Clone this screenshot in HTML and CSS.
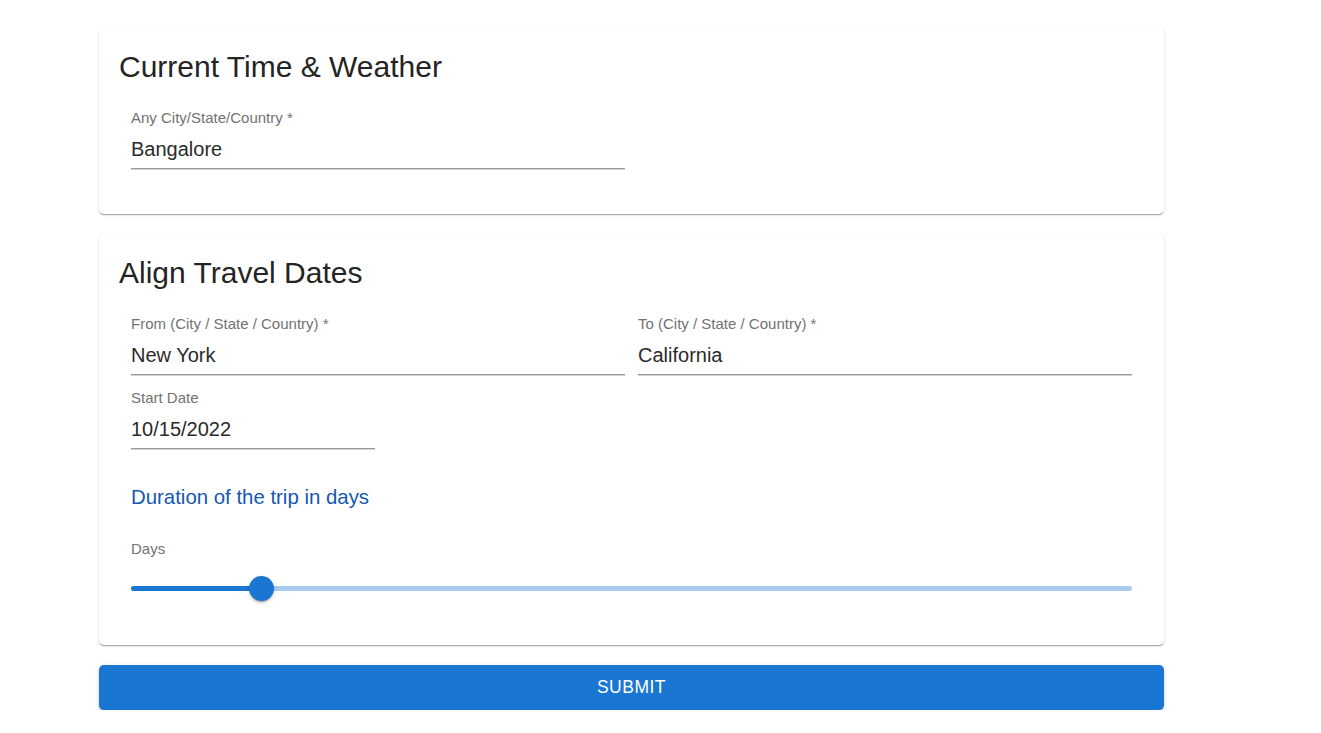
FILE: index.html
```html
<!DOCTYPE html>
<html lang="en">
<head>
<meta charset="UTF-8" />
<title>Time, Weather &amp; Travel</title>
<link rel="stylesheet" href="styles.css">
</head>
<body>
  <div class="page">
    <div class="card card-weather">
      <h2 class="card-title">Current Time &amp; Weather</h2>
      <div class="fields">
        <div class="field">
          <label class="field-label">Any City/State/Country *</label>
          <div class="field-input">Bangalore</div>
        </div>
      </div>
    </div>

    <div class="card card-travel">
      <h2 class="card-title">Align Travel Dates</h2>
      <div class="fields grid-two">
        <div class="field">
          <label class="field-label">From (City / State / Country) *</label>
          <div class="field-input">New York</div>
        </div>
        <div class="field">
          <label class="field-label">To (City / State / Country) *</label>
          <div class="field-input">California</div>
        </div>
        <div class="field field-date">
          <label class="field-label">Start Date</label>
          <div class="field-input">10/15/2022</div>
        </div>
      </div>

      <div class="duration">
        <p class="duration-title">Duration of the trip in days</p>
        <span class="field-label">Days</span>
        <div class="slider">
          <div class="slider-rail"></div>
          <div class="slider-track" style="width: 13%"></div>
          <div class="slider-thumb" style="left: 13%"></div>
        </div>
      </div>
    </div>

    <button type="button" class="submit">Submit</button>
  </div>
</body>
</html>
```

FILE: styles.css
```css
* {
  box-sizing: border-box;
}
body {
  margin: 0;
  background: #fff;
  color: rgba(0, 0, 0, 0.87);
  font-family: "Liberation Sans", Arial, sans-serif;
}
.page {
  width: 1065px;
  margin: 27px 0 0 99px;
}
.card {
  background: #fff;
  border-radius: 5px;
  box-shadow: 0 2px 1px -1px rgba(0, 0, 0, 0.2),
              0 1px 1px 0 rgba(0, 0, 0, 0.14),
              0 1px 3px 0 rgba(0, 0, 0, 0.12);
  padding: 20px 20px 45px;
}
.card-travel {
  margin-top: 19px;
  padding-bottom: 44px;
}
.card-title {
  margin: 0;
  font-size: 30px;
  font-weight: 400;
  line-height: 40px;
  color: #242424;
}
.fields {
  margin: 21px 12px 0;
}
.grid-two {
  display: grid;
  grid-template-columns: 1fr 1fr;
  gap: 13px;
}
.field {
  display: flex;
  flex-direction: column;
  width: 494px;
}
.grid-two .field {
  width: auto;
}
.grid-two .field-date {
  width: 244px;
}
.field-label {
  display: block;
  font-size: 15px;
  line-height: 20px;
  color: #727272;
}
.field-input {
  margin-top: 9px;
  font-size: 20px;
  line-height: 25px;
  padding-bottom: 6px;
  color: #2a2a2a;
  border-bottom: 1px solid #9a9a9a;
  box-shadow: 0 1px 0 #d4d4d4;
}
.duration {
  margin: 34px 12px 0;
}
.duration-title {
  margin: 0 0 28px;
  font-size: 20.4px;
  line-height: 28px;
  color: #1558b0;
}
.slider {
  position: relative;
  height: 26px;
  margin-top: 16px;
}
.slider-rail,
.slider-track {
  position: absolute;
  left: 0;
  top: 11px;
  height: 5px;
  border-radius: 3px;
}
.slider-rail {
  width: 100%;
  background: #1976d2;
  opacity: 0.38;
}
.slider-track {
  background: #1976d2;
}
.slider-thumb {
  position: absolute;
  top: 1px;
  width: 25px;
  height: 25px;
  margin-left: -12px;
  border-radius: 50%;
  background: #1976d2;
  box-shadow: 0 3px 1px -2px rgba(0, 0, 0, 0.2),
              0 2px 2px 0 rgba(0, 0, 0, 0.14),
              0 1px 5px 0 rgba(0, 0, 0, 0.12);
}
.submit {
  display: block;
  width: 100%;
  height: 45px;
  margin-top: 20px;
  border: none;
  border-radius: 5px;
  background: #1976d2;
  color: #fff;
  font-family: "Liberation Sans", Arial, sans-serif;
  font-size: 17.5px;
  letter-spacing: 0.5px;
  text-transform: uppercase;
  cursor: pointer;
  box-shadow: 0 3px 1px -2px rgba(0, 0, 0, 0.2),
              0 2px 2px 0 rgba(0, 0, 0, 0.14),
              0 1px 5px 0 rgba(0, 0, 0, 0.12);
}
```
